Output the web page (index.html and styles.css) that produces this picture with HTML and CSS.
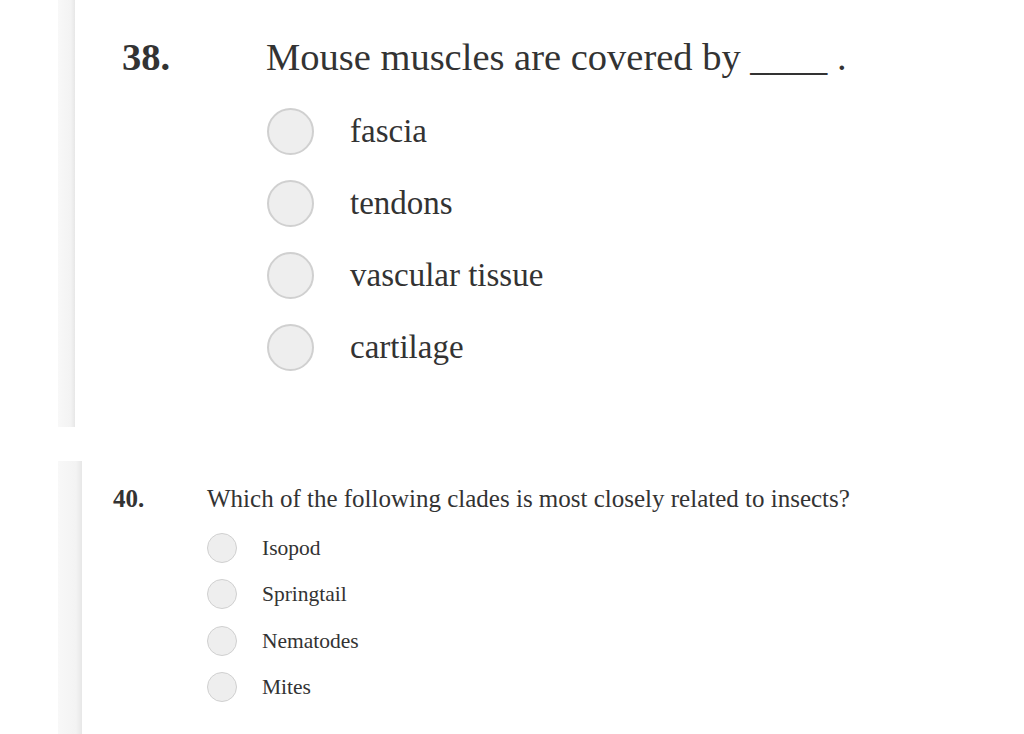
FILE: index.html
```html
<!DOCTYPE html>
<html>
<head>
<meta charset="utf-8">
<link rel="stylesheet" href="styles.css">
</head>
<body>
<section class="q q-large">
  <div class="bar"></div>
  <div class="body">
    <div class="head"><span class="num">38.</span><span class="text">Mouse muscles are covered by ____ .</span></div>
    <ul class="opts">
      <li><span class="radio"></span><span class="label">fascia</span></li>
      <li><span class="radio"></span><span class="label">tendons</span></li>
      <li><span class="radio"></span><span class="label">vascular tissue</span></li>
      <li><span class="radio"></span><span class="label">cartilage</span></li>
    </ul>
  </div>
</section>
<section class="q q-small">
  <div class="bar"></div>
  <div class="body">
    <div class="head"><span class="num">40.</span><span class="text">Which of the following clades is most closely related to insects?</span></div>
    <ul class="opts">
      <li><span class="radio"></span><span class="label">Isopod</span></li>
      <li><span class="radio"></span><span class="label">Springtail</span></li>
      <li><span class="radio"></span><span class="label">Nematodes</span></li>
      <li><span class="radio"></span><span class="label">Mites</span></li>
    </ul>
  </div>
</section>
</body>
</html>
```
FILE: styles.css
```css
* { box-sizing: border-box; }
html, body { margin: 0; padding: 0; background: #fff; }
body {
  font-family: "Liberation Serif", "Times New Roman", serif;
  color: #333;
  width: 1024px;
  height: 734px;
  overflow: hidden;
}
.q { display: flex; }
.bar {
  background: linear-gradient(to right, #f8f8f8 0%, #f3f3f3 75%, #e7e7e7 100%);
  flex: none;
}
.head { display: flex; }
.num { font-weight: bold; flex: none; }
.opts { list-style: none; margin: 0; padding: 0; }
.opts li { display: flex; align-items: center; }
.radio {
  flex: none;
  border-radius: 50%;
  background: #eeeeee;
  border: 2px solid #d0d0d0;
}

/* large question */
.q-large { height: 427px; }
.q-large .bar { width: 17px; margin-left: 58px; }
.q-large .body { padding: 35px 0 0 47px; }
.q-large .head { font-size: 38.5px; line-height: 44px; }
.q-large .num { width: 144px; }
.q-large .opts { margin: 16px 0 0 145px; }
.q-large .opts li { height: 72px; }
.q-large .radio { width: 47px; height: 47px; margin-right: 36px; }
.q-large .label { font-size: 33px; line-height: 40px; }

/* small question */
.q-small { margin-top: 34px; height: 273px; }
.q-small .bar { width: 24px; margin-left: 58px; }
.q-small .body { padding: 24px 0 0 31px; }
.q-small .head { font-size: 25px; line-height: 28px; }
.q-small .num { width: 94px; }
.q-small .opts { margin: 12px 0 0 94px; }
.q-small .opts li { height: 46.3px; }
.q-small .radio { width: 30px; height: 30px; border-width: 1.5px; margin-right: 25px; }
.q-small .label { font-size: 21.5px; line-height: 24px; }
```
